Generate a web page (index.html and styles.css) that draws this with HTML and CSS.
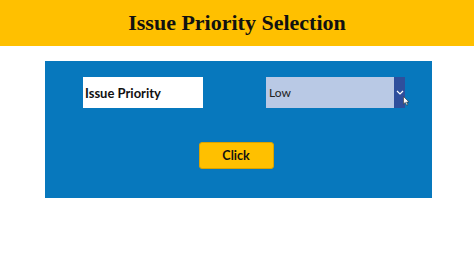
FILE: index.html
```html
<!DOCTYPE html>
<html>
<head>
<meta charset="utf-8">
<link rel="stylesheet" href="styles.css">
</head>
<body>
<header class="topbar"><h1 class="title">Issue Priority Selection</h1></header>
<main class="panel">
  <div class="row">
    <div class="label-box">Issue Priority</div>
    <div class="dropdown">
      <span class="dd-value">Low</span>
      <span class="dd-btn">
        <svg width="8" height="5" viewBox="0 0 8 5"><path d="M1 1 L4 4 L7 1" fill="none" stroke="#fff" stroke-width="1.2"/></svg>
        <svg class="cursor" width="7" height="10" viewBox="0 0 7 10"><path d="M0.5 0.5 L0.5 8 L2.3 6.4 L3.6 9.3 L4.8 8.8 L3.6 6 L6 6 Z" fill="#fff" stroke="#333" stroke-width="0.6"/></svg>
      </span>
    </div>
  </div>
  <div class="actions"><button class="btn">Click</button></div>
</main>
</body>
</html>
```
FILE: styles.css
```css
html, body { margin: 0; padding: 0; background: #fff; }
.topbar {
  height: 46px;
  background: #FFC000;
  display: flex;
  align-items: center;
  justify-content: center;
}
.title {
  margin: 0;
  font-family: "Liberation Serif", Georgia, serif;
  font-weight: bold;
  font-size: 22px;
  color: #111;
}
.panel {
  margin: 15px 42px 0 45px;
  height: 137px;
  background: #0778BD;
  box-sizing: border-box;
  padding-top: 16px;
}
.row {
  display: flex;
  align-items: flex-start;
  padding-left: 38px;
}
.label-box {
  width: 120px;
  height: 31px;
  background: #fff;
  box-sizing: border-box;
  padding-left: 2px;
  display: flex;
  align-items: center;
  font-family: Lato, "Open Sans", sans-serif;
  font-weight: 700;
  font-size: 13px;
  color: #111;
}
.dropdown {
  margin-left: 63px;
  width: 139px;
  height: 31px;
  display: flex;
}
.dd-value {
  flex: 1;
  background: #B9C9E5;
  display: flex;
  align-items: center;
  padding-left: 3px;
  font-family: Lato, "Open Sans", sans-serif;
  font-size: 12px;
  color: #222;
}
.dd-btn {
  width: 11px;
  background: #2F4F9C;
  display: flex;
  align-items: center;
  justify-content: center;
  position: relative;
}
.cursor { position: absolute; left: 9px; top: 19px; }
.actions {
  display: flex;
  justify-content: center;
  padding-top: 34px;
  padding-right: 5px;
}
.btn {
  width: 75px;
  height: 27px;
  background: #FFC000;
  border: 1px solid #D9A200;
  border-radius: 3px;
  font-family: Lato, "Open Sans", sans-serif;
  font-weight: 700;
  font-size: 12.5px;
  color: #111;
  padding: 0;
}
```
